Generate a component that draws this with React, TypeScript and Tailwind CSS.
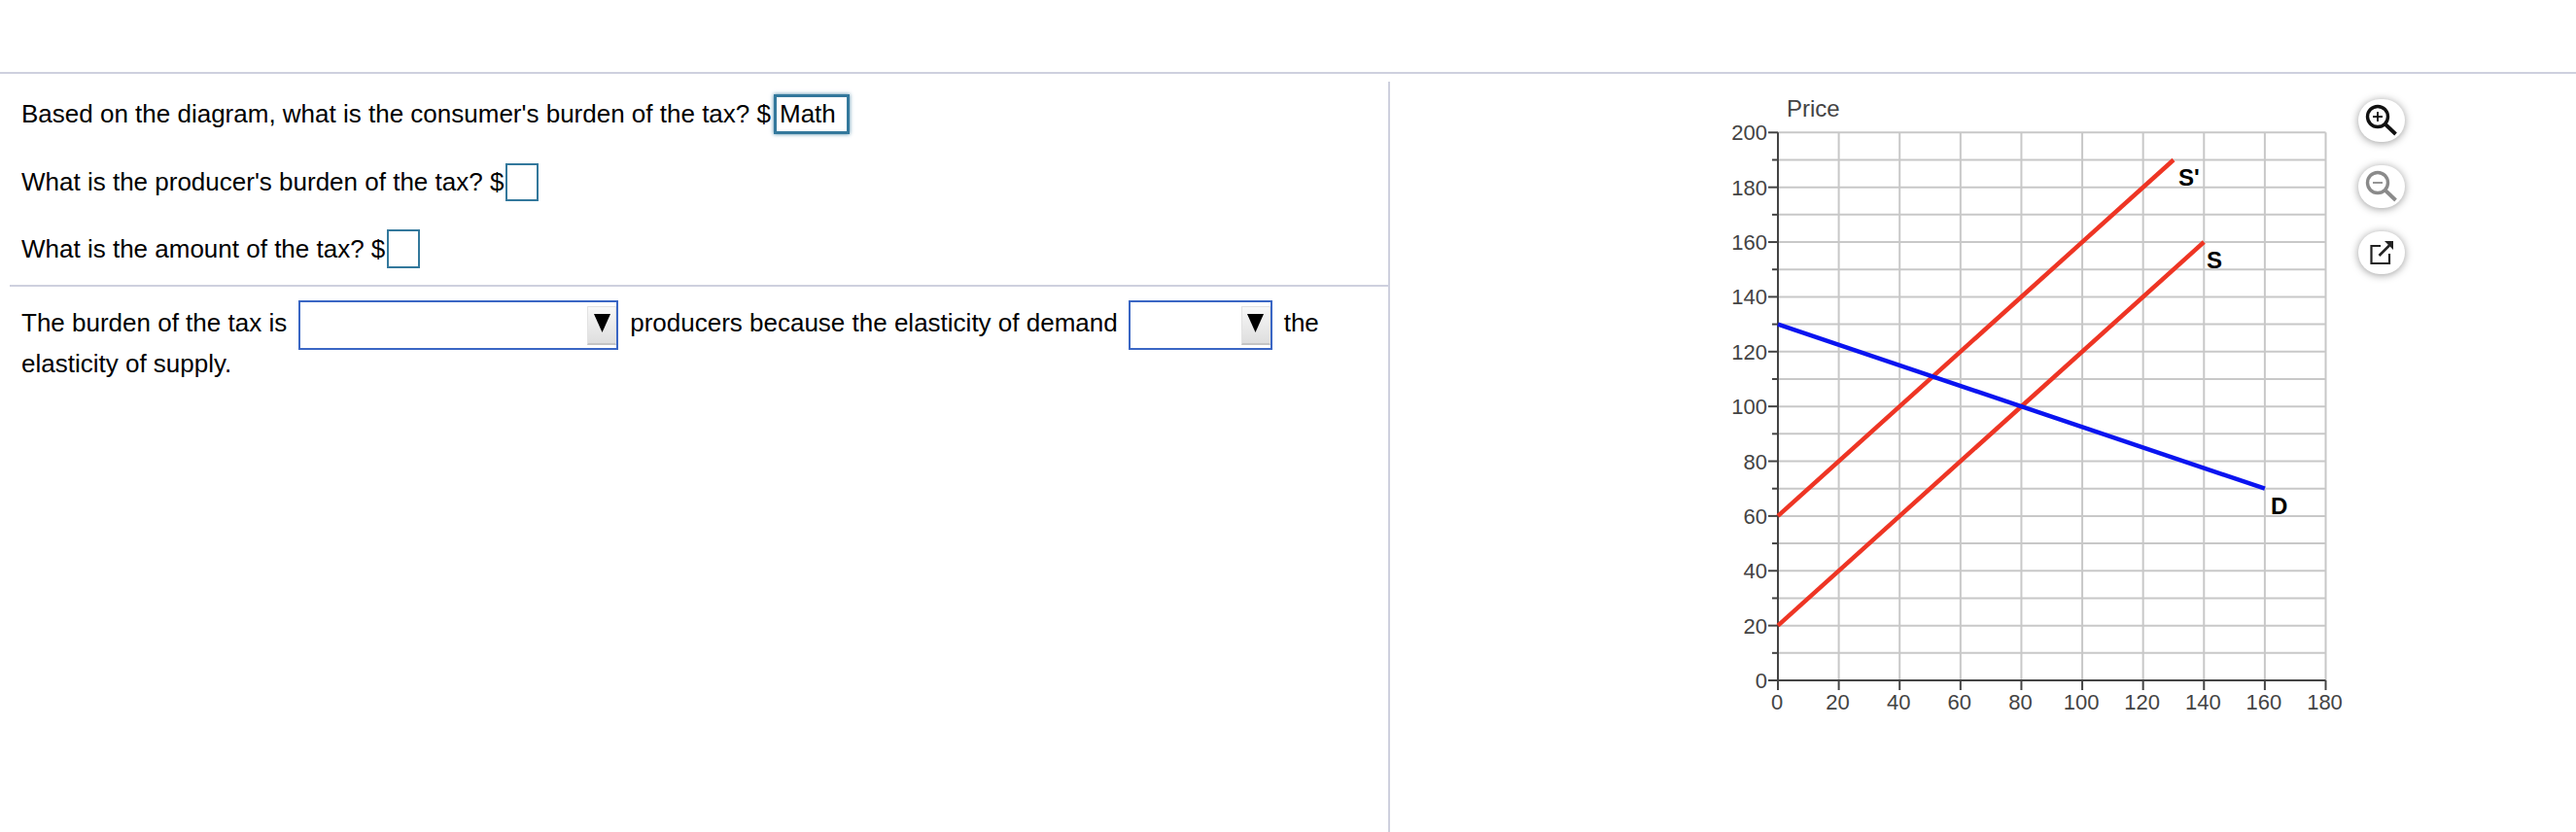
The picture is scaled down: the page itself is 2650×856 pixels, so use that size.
import React from "react";

const xAt = (v: number) => 59 + (v / 180) * 563.5;
const yAt = (v: number) => 616 - (v / 200) * 563.7;

const xTicks = [0, 20, 40, 60, 80, 100, 120, 140, 160, 180];
const yTicks = Array.from({ length: 21 }, (_, i) => i * 10);

function Chart() {
  return (
    <svg width="650" height="660" viewBox="0 0 650 660" className="block shrink-0">
      {/* grid */}
      {yTicks.map((v) => (
        <line key={v} x1={xAt(0)} x2={xAt(180)} y1={yAt(v)} y2={yAt(v)} stroke="#c8c8c8" strokeWidth="2" />
      ))}
      {xTicks.map((v) => (
        <line key={v} x1={xAt(v)} x2={xAt(v)} y1={yAt(0)} y2={yAt(200)} stroke="#c8c8c8" strokeWidth="2" />
      ))}

      {/* axes */}
      <line x1={xAt(0)} x2={xAt(0)} y1={yAt(0)} y2={yAt(200)} stroke="#444" strokeWidth="2" />
      <line x1={xAt(0)} x2={xAt(180)} y1={yAt(0)} y2={yAt(0)} stroke="#444" strokeWidth="2" />
      {yTicks.map((v) => (
        <line key={v} x1={xAt(0) - (v % 20 === 0 ? 10 : 6)} x2={xAt(0)} y1={yAt(v)} y2={yAt(v)} stroke="#444" strokeWidth="2" />
      ))}
      {xTicks.map((v) => (
        <line key={v} x1={xAt(v)} x2={xAt(v)} y1={yAt(0)} y2={yAt(0) + 10} stroke="#444" strokeWidth="2" />
      ))}

      {/* axis labels */}
      <g fill="#444" fontSize="22" fontFamily="'Liberation Sans', Arial, sans-serif">
        <text x="68" y="36" fontSize="24">Price</text>
        {yTicks.filter((v) => v % 20 === 0).map((v) => (
          <text key={v} x={xAt(0) - 11} y={yAt(v) + 8} textAnchor="end">{v}</text>
        ))}
        {xTicks.map((v) => (
          <text key={v} x={xAt(v) - 1} y={yAt(0) + 30} textAnchor="middle">{v}</text>
        ))}
      </g>

      {/* curves */}
      <line x1={xAt(0)} y1={yAt(20)} x2={xAt(140)} y2={yAt(160)} stroke="#ee3524" strokeWidth="4.5" />
      <line x1={xAt(0)} y1={yAt(60)} x2={xAt(130)} y2={yAt(190)} stroke="#ee3524" strokeWidth="4.5" />
      <line x1={xAt(0)} y1={yAt(130)} x2={xAt(160)} y2={yAt(70)} stroke="#0a14f0" strokeWidth="4.5" />

      <g fill="#000" fontSize="24" fontWeight="700" fontFamily="'Liberation Sans', Arial, sans-serif">
        <text x="471" y="107">S'</text>
        <text x="500" y="192">S</text>
        <text x="566" y="445">D</text>
      </g>
    </svg>
  );
}

function ToolButton({ children }: { children: React.ReactNode }) {
  return (
    <button className="flex h-[44px] w-[48px] items-center justify-center rounded-full bg-white shadow-[0_1px_8px_rgba(0,0,0,0.4)]">
      {children}
    </button>
  );
}

function Dropdown({ className }: { className: string }) {
  return (
    <span className={`relative -my-[12px] mr-[12px] inline-block h-[51px] border-2 border-[#3a66c4] bg-white align-middle ${className}`}>
      <span className="absolute top-[4px] right-0 flex h-[40px] w-[30px] justify-center border border-[#e2e2e2] border-b-2 border-b-[#c4c4c4] bg-gradient-to-b from-[#f8f8f8] to-[#dedede] pt-[7px]">
        <svg width="17" height="19" viewBox="0 0 17 19">
          <path d="M0 0h17L8.5 19z" fill="#000" />
        </svg>
      </span>
    </span>
  );
}

export default function App() {
  return (
    <div className="h-[856px] w-[2650px] overflow-hidden bg-white font-['Liberation_Sans',Arial,sans-serif] text-[26px] text-black">
      <div className="h-[76px] border-b-2 border-[#ced0de]" />

      <div className="mt-[8px] flex h-[772px]">
        {/* question column */}
        <div className="w-[1430px] shrink-0 border-r-2 border-[#ced0de] pl-[10px]">
          <div className="flex h-[66px] items-center pl-[12px]">
            <span>Based on the diagram, what is the consumer's burden of the tax? $</span>
            <span className="ml-[3px] flex h-[41px] w-[78px] items-center border-[3px] border-[#33789c] pl-[3px] shadow-[0_0_4px_rgba(51,120,156,0.9)]">
              Math
            </span>
          </div>
          <div className="mt-[4px] flex h-[66px] items-center pl-[12px]">
            <span>What is the producer's burden of the tax? $</span>
            <span className="ml-[2px] h-[39px] w-[34px] border-2 border-[#33789c]" />
          </div>
          <div className="mt-[3px] flex h-[66px] items-center pl-[12px]">
            <span>What is the amount of the tax? $</span>
            <span className="ml-[2px] h-[40px] w-[34px] border-2 border-[#33789c]" />
          </div>
          <div className="mt-[4px] border-b-2 border-[#ced0de]" />
          <p className="mt-[16px] pl-[12px] pr-[60px] leading-[42px]">
            <span>The burden of the tax is</span>
            <Dropdown className="ml-[12px] w-[329px]" />
            <span>producers because the elasticity of demand</span>
            <Dropdown className="ml-[11px] w-[148px]" />
            <span>the</span> <span>elasticity of supply.</span>
          </p>
        </div>

        {/* graph column */}
        <div className="flex flex-1 pl-[340px]">
          <Chart />
          <div className="ml-[6px] mt-[18px] flex flex-col gap-[24px]">
            <ToolButton>
              <svg width="48" height="44" viewBox="0 0 48 44" fill="none" stroke="#111">
                <circle cx="20" cy="18" r="10.5" strokeWidth="3.4" />
                <path d="M20 13v10M15 18h10" strokeWidth="1.8" />
                <path d="M28 26l10.5 10" strokeWidth="3.8" />
              </svg>
            </ToolButton>
            <ToolButton>
              <svg width="48" height="44" viewBox="0 0 48 44" fill="none" stroke="#8a8a8a">
                <circle cx="20" cy="18" r="10.5" strokeWidth="3.4" />
                <path d="M15 18h10" strokeWidth="1.8" />
                <path d="M28 26l10.5 10" strokeWidth="3.8" />
              </svg>
            </ToolButton>
            <ToolButton>
              <svg width="48" height="44" viewBox="0 0 48 44" fill="none" stroke="#222" strokeWidth="2.2">
                <path d="M23 15H13.5v18h18.5V23" />
                <path d="M21.5 25L32 14.5" strokeWidth="2.6" />
                <path d="M27 10h9v9z" fill="#222" stroke="none" />
              </svg>
            </ToolButton>
          </div>
        </div>
      </div>
    </div>
  );
}
